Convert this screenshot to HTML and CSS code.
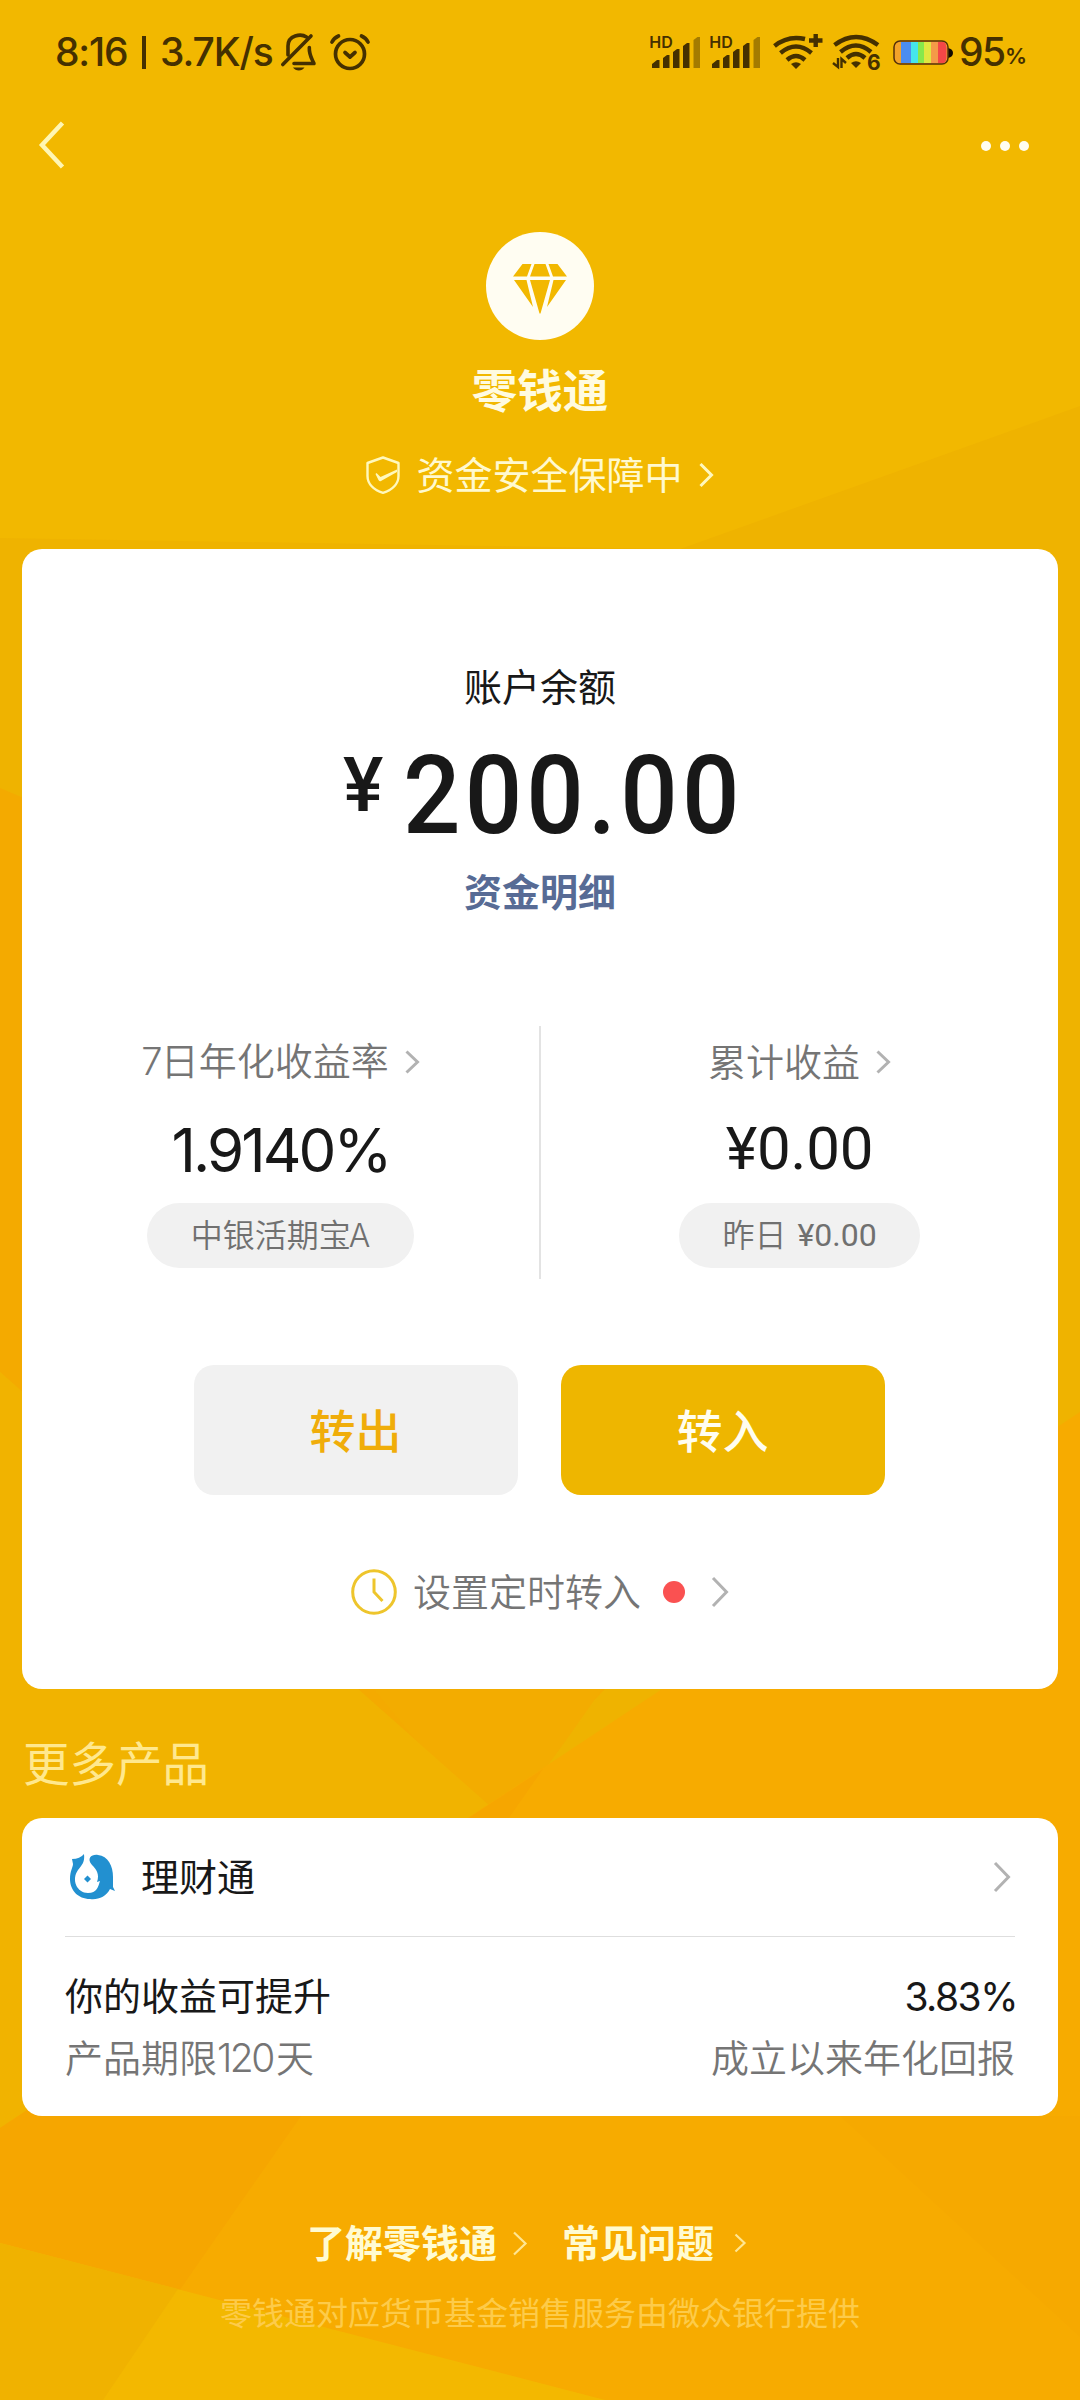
FILE: index.html
```html
<!DOCTYPE html>
<html lang="zh-CN">
<head>
<meta charset="utf-8">
<title>零钱通</title>
<link rel="stylesheet" href="styles.css">
</head>
<body>
<svg class="backdrop" viewBox="0 0 1080 2400" aria-hidden="true">
  <path fill="#f2b800" d="M0 0H1080V2400H0z"/>
  <path fill="#efb300" d="M1080 406L680 549 0 538V1900H1080z"/>
  <path fill="#f4aa00" d="M0 788L500 1000 605 1689 490 1806 0 1372z"/>
  <path fill="#f3ac00" d="M300 1600H665L545 1770 490 1830z"/>
  <path fill="#f1b300" d="M0 1372L490 1806 470 1818 0 2128z"/>
  <path fill="#efb300" d="M605 1689L545 1769 665 1689z"/>
  <path fill="#f7ab00" d="M1080 1412L0 2128V2400H1080z"/>
  <path fill="#f6a600" d="M543 1769L0 2128V2400H103z"/>
  <path fill="#f6a900" d="M840 2116L1080 2337V2116z"/>
  <path fill="#f3b800" d="M0 2243L605 2400H0z"/>
  <path fill="#f0b200" d="M0 2243L178 2289 103 2400H0z"/>
</svg>
<div class="screen">
  <header class="status">
    <div class="status-left">
      <span class="clock">8:16</span><i class="bar"></i><span class="speed">3.7K/s</span>
      <svg class="bell" width="36" height="38" viewBox="0 0 36 38" fill="none" stroke="currentColor" stroke-width="3.6" stroke-linecap="round" stroke-linejoin="round"><path d="M1.8 31.5L30 3"/><path d="M7 22V13C7 2 20 .3 25.5 4"/><path d="M28.300 14.500C28 22 30.500 25 33 30.500H13"/><path d="M12 34.500H23.500Q21.500 37.500 17.800 37.500T12 34.500z" fill="currentColor" stroke="none"/></svg>
      <svg class="alarm" width="40" height="38" viewBox="0 0 40 38" fill="none" stroke="currentColor" stroke-width="3.700" stroke-linecap="round" stroke-linejoin="round"><circle cx="20" cy="21" r="14.500"/><path d="M15 19.500L20 24 25 19.500M2 9Q4 5 8.500 3M38 9Q36 5 31.500 3"/></svg>
    </div>
    <div class="status-right">
      <svg class="signal" width="50" height="34" viewBox="0 0 50 34"><text x="-.8" y="12.800" class="hd">HD</text><g fill="currentColor"><path d="M2 33v-4l5-4h2.500v8zM13 33V23l4-3h2.500v13zM23 33V17l4-3h2.500v19zM33 33V11l4-3h2.500v25z"/><path opacity=".45" d="M43.500 33V5l4-3h2.500v31z"/></g></svg>
      <svg class="signal" width="50" height="34" viewBox="0 0 50 34"><text x="-.8" y="12.800" class="hd">HD</text><g fill="currentColor"><path d="M2 33v-4l5-4h2.500v8zM13 33V23l4-3h2.500v13zM23 33V17l4-3h2.500v19zM33 33V11l4-3h2.500v25z"/><path opacity=".45" d="M43.500 33V5l4-3h2.500v31z"/></g></svg>
      <svg class="wifi-plus" width="50" height="36" viewBox="0 0 50 36" fill="none" stroke="currentColor" stroke-width="4.400"><path d="M1.500 12Q15 1 32 5M7.500 19Q23 6 38.500 19M14 26Q23 18 32 26M36 6.500H49.500M42.700 0V13"/><path d="M18 30Q23 26.500 28 30L23 35z" fill="currentColor" stroke="none"/></svg>
      <svg class="wifi-six" width="48" height="38" viewBox="0 0 48 38" fill="none" stroke="currentColor" stroke-width="4.400"><path d="M1.500 12Q23 -4 45 12M7.500 19Q23 6 38 19M14 25Q23 17 32 25"/><path d="M18 30Q23 26.500 28 30L23 35z" fill="currentColor" stroke="none"/><path stroke-width="2.400" d="M0 30L5 34V25M8.500 35V26L13 30"/><text x="34" y="37" class="six">6</text></svg>
      <svg class="battery" width="60" height="26" viewBox="0 0 60 26"><path fill="#120a00" d="M55 8Q60 9 60 13T55 18z"/><rect x="1" y="1" width="54" height="23" rx="6" fill="#f3a32a" stroke="#54300a" stroke-width="1.500"/><path fill="#4b8df0" d="M8 2h10v21H8z"/><path fill="#45e6ec" d="M18 2h7v21h-7z"/><path fill="#86e84c" d="M25 2h6v21h-6z"/><path fill="#dfe740" d="M31 2h7v21h-7z"/><path fill="#f49a48" d="M38 2h7v21h-7z"/><path fill="#f34747" d="M45 2h6q2.500 2 2.500 5v11q0 3-2.500 5h-6z"/></svg>
      <span class="level">95</span><span class="percent">%</span>
    </div>
  </header>
  <nav class="nav">
    <svg width="28" height="50" viewBox="0 0 28 50" fill="none" stroke="#fff6b4" stroke-width="4.500"><path d="M24.500 3L4 25 24.500 47"/></svg>
    <div class="dots"><i></i><i></i><i></i></div>
  </nav>
  <section class="hero">
    <div class="gem"><svg width="54" height="50" viewBox="0 0 54 50" fill="#f2b800"><path d="M9.500 0H18.500L14 12.500H0zM21.500 0H32.500L37 12.500H17zM35.500 0H44.500L54 12.500H40zM1 16H13.500L20 43zM17 16H37L27.500 49.500H26.500zM40.500 16H53L34 43z"/></svg></div>
    <h1>零钱通</h1>
    <div class="safe">
      <svg width="34" height="38" viewBox="0 0 34 38" fill="none" stroke="#fff8bd" stroke-width="2.400" stroke-linejoin="round"><path d="M17 1.500L32.500 7V20C32.500 28 26 34 17 36.800 8 34 1.500 28 1.500 20V7z"/><path fill="#fff8bd" stroke="none" d="M10.500 17L14.500 21 31 13.500V16L15 25Q13.500 26 12.500 24L9.500 18z"/></svg>
      <span>资金安全保障中</span>
      <svg class="chev" width="15" height="26" viewBox="0 0 15 26" fill="none" stroke="#fff8bd" stroke-width="3"><path d="M1.500 2L12.500 13 1.500 24"/></svg>
    </div>
  </section>
  <main class="card account">
    <div class="label">账户余额</div>
    <div class="amount"><span class="yen">¥</span><span class="digits">200.00</span></div>
    <a class="detail">资金明细</a>
    <div class="stats">
      <div class="stat">
        <div class="stat-name"><span><span class="seven">7</span>日年化收益率</span><svg width="15" height="24" viewBox="0 0 15 24" class="go"><path d="M1.500 1.500L12.500 12 1.500 22.500"/></svg></div>
        <div class="rate">1.9140%</div>
        <div class="pill">中银活期宝<span class="latin">A</span></div>
      </div>
      <div class="stat">
        <div class="stat-name"><span>累计收益</span><svg width="15" height="24" viewBox="0 0 15 24" class="go"><path d="M1.500 1.500L12.500 12 1.500 22.500"/></svg></div>
        <div class="profit">¥0.00</div>
        <div class="pill pill-day"><span>昨日</span><span class="num">¥0.00</span></div>
      </div>
    </div>
    <div class="actions"><button class="out">转出</button><button class="in">转入</button></div>
    <div class="schedule">
      <svg width="46" height="46" viewBox="0 0 46 46" fill="none" stroke="#eec52c" stroke-width="3"><circle cx="23" cy="23" r="21.300"/><path d="M23 9.500V23L31.500 32"/></svg>
      <span>设置定时转入</span><i class="red"></i>
      <svg width="18" height="32" viewBox="0 0 18 32" class="go"><path d="M2 2L15.500 16 2 30"/></svg>
    </div>
  </main>
  <h2>更多产品</h2>
  <section class="card product">
    <div class="product-head">
      <svg width="46" height="46" viewBox="0 0 46 46"><path fill="#2290d0" d="M3 5Q11 5 15 0C16 8 13 11 9 16C2 26 8 39 19 39C28 39 29 33 31 27L28 28C31 20 27 15 23 11C17 4 23 0 29 1C39 2 44 12 44 23V33L46 37L41 35C37 43 29 46 21 45C9 45 1 36 1 25C1 17 4 13 4 10z"/><path fill="#2290d0" d="M18.500 21.500L22 25 18.500 28.500 15 25z"/></svg>
      <span>理财通</span>
      <svg width="18" height="32" viewBox="0 0 18 32" class="go"><path d="M2 2L15.500 16 2 30"/></svg>
    </div>
    <div class="row strong"><span>你的收益可提升</span><span class="yield">3.83%</span></div>
    <div class="row faint"><span>产品期限<span class="days">120</span>天</span><span>成立以来年化回报</span></div>
  </section>
  <footer>
    <div class="links">
      <span>了解零钱通</span><svg class="l1" width="16" height="25" viewBox="0 0 16 25"><path d="M2 1.500L13.500 12.500 2 23.500"/></svg>
      <span>常见问题</span><svg class="l2" width="13" height="20" viewBox="0 0 13 20"><path d="M1.500 1.500L10.500 10 1.500 18.500"/></svg>
    </div>
    <p>零钱通对应货币基金销售服务由微众银行提供</p>
  </footer>
</div>
</body>
</html>
```
FILE: styles.css
```css
* { box-sizing: border-box; margin: 0; padding: 0; }
body {
  width: 1080px; height: 2400px; overflow: hidden; position: relative;
  background: #f2b800; color: #181818;
  font: 400 38px/50px "Noto Sans CJK SC", sans-serif;
}
svg { display: block; flex: none; overflow: visible; }
i { display: block; flex: none; }
.backdrop { position: absolute; inset: 0; width: 1080px; height: 2400px; }
.screen { position: relative; width: 1080px; height: 2400px; display: flex; flex-direction: column; }

.status {
  height: 104px; padding: 0 55px 0 55px; display: flex; justify-content: space-between; align-items: center;
  color: #453000; font-family: Inter, sans-serif; font-weight: 500; font-size: 39px;
}
.status-left, .status-right { display: flex; align-items: center; }
.clock { width: 87px; letter-spacing: -1.2px; }
.bar { width: 4px; height: 33px; background: #453000; margin-right: 14px; }
.speed { width: 121px; letter-spacing: -1.1px; }
.alarm { margin-left: 13px; }
.signal { margin-right: 10px; }
.hd { font: 600 16px Inter, sans-serif; fill: currentColor; }
.six { font: 700 21px Inter, sans-serif; fill: currentColor; stroke: none; }
.wifi-plus { margin-left: 3px; }
.wifi-six { margin-left: 10px; }
.battery { margin: 2px 6px 0 12px; }
.level { width: 46px; letter-spacing: -1.5px; }
.percent { font-size: 22px; font-weight: 600; padding-top: 8px; width: 20px; }

.nav { height: 82px; padding: 0 51px 0 38px; display: flex; justify-content: space-between; align-items: center; }
.dots { display: flex; gap: 9px; position: relative; top: 1px; }
.dots i { width: 10px; height: 10px; border-radius: 50%; background: #fffdf0; }

.hero { margin-top: 46px; display: flex; flex-direction: column; align-items: center; color: #fffbe0; }
.gem { width: 108px; height: 108px; border-radius: 50%; background: #fffdf2; display: flex; justify-content: center; align-items: center; padding-top: 6px; }
h1 { margin-top: 18px; font-size: 45.5px; line-height: 60px; font-weight: 600; }
.safe { margin-top: 30px; height: 50px; display: flex; align-items: center; color: #fff9cf; }
.safe span { margin: 0 16px 0 16px; }
.safe svg { position: relative; top: 2px; }

.card { margin: 0 22px; background: #fff; border-radius: 20px; }
.account { margin-top: 51px; height: 1140px; padding-top: 111px; display: flex; flex-direction: column; align-items: center; }
.label { height: 50px; }
.amount { margin-top: 33px; width: 394px; height: 100px; display: flex; font: 500 110px/105px Roboto, sans-serif; }
.amount .yen { font-size: 76px; line-height: 84px; margin-right: 20px; }
.digits { width: 328px; letter-spacing: 4.5px; transform: scaleX(.92); transform-origin: left; white-space: nowrap; }
.detail { margin-top: 22px; color: #576b95; font-weight: 600; }
.stats { margin-top: 111px; width: 100%; height: 253px; display: grid; grid-template-columns: 519px 517px; }
.stat { padding-top: 9px; display: flex; flex-direction: column; align-items: center; }
.stat:first-child { border-right: 2px solid #e3e3e3; }
.stat-name { height: 50px; display: flex; align-items: center; gap: 16px; color: #757575; font-weight: 350; }
.stat-name svg { position: relative; top: 2px; }
.go { fill: none; stroke: #b2b2b2; stroke-width: 3; }
.seven { font-family: Inter, sans-serif; letter-spacing: -2px; }
.rate, .profit { margin-top: 30px; height: 70px; line-height: 70px; font-size: 60px; }
.rate { font-family: Inter, sans-serif; letter-spacing: -2.9px; }
.profit { font-family: Roboto, sans-serif; line-height: 68px; letter-spacing: -.2px; }
.pill { margin-top: 18px; height: 65px; line-height: 61px; padding: 0 44px; border-radius: 33px; background: #f1f1f1; color: #707070; font-size: 32px; font-weight: 350; }
.latin { font-family: Inter, sans-serif; margin-left: -2px; }
.pill-day { display: flex; gap: 11px; padding: 0 43px; }
.num { font-family: Roboto, sans-serif; font-weight: 400; line-height: 64px; }
.actions { margin-top: 86px; display: flex; gap: 43px; margin-right: 2px; }
button { width: 324px; height: 130px; border: 0; border-radius: 20px; font: 500 46px/60px "Noto Sans CJK SC", sans-serif; padding-bottom: 5px; }
.out { background: #f1f1f1; color: #f0ad0a; }
.in { background: #eeb600; color: #fffdf0; }
.schedule { margin-top: 72px; height: 50px; display: flex; align-items: center; color: #757575; font-weight: 350; }
.schedule span { margin: 0 22px 0 16px; position: relative; top: -2px; }
.red { width: 22px; height: 22px; border-radius: 50%; background: #fa5151; margin-right: 26px; }

h2 { margin: 42px 0 27px 23px; font-size: 46.5px; line-height: 60px; font-weight: 400; color: #ffe88e; }
.product { height: 298px; padding: 0 43px; }
.product-head { height: 119px; border-bottom: 1px solid #dedede; display: flex; align-items: center; padding: 0 4px 0 4px; }
.product-head span { flex: 1; margin-left: 26px; position: relative; top: -2px; }
.row { display: flex; justify-content: space-between; height: 50px; }
.strong { margin-top: 32px; }
.faint { margin-top: 12px; color: #757575; font-weight: 350; }
.yield { font-family: Inter, sans-serif; font-size: 39px; line-height: 55px; letter-spacing: -1.5px; margin-right: -2px; }
.days { font-family: Inter, sans-serif; font-size: 39px; letter-spacing: -2.500px; margin-right: 3px; }

footer { margin-top: 100px; color: #fffbd2; }
.links { height: 50px; display: flex; align-items: center; font-weight: 600; padding-left: 307px; }
.links svg { fill: none; stroke: #ffe693; stroke-width: 2.200; position: relative; top: 2px; }
.l1 { margin: 0 34px 0 15px; }
.l2 { margin-left: 20px; }
footer p { margin-top: 20px; text-align: center; font-size: 32px; font-weight: 400; color: #fdcb4a; }
```
